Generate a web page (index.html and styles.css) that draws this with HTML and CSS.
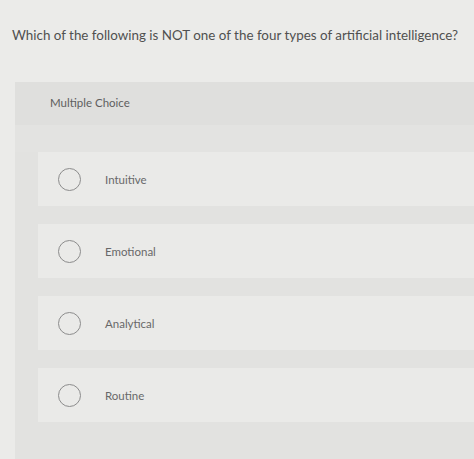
FILE: index.html
```
<!DOCTYPE html>
<html>
<head>
<meta charset="utf-8">
<link rel="stylesheet" href="styles.css">
</head>
<body>
<p class="question">Which of the following is NOT one of the four types of artificial intelligence?</p>
<div class="panel">
  <div class="panel-head">Multiple Choice</div>
  <div class="options">
    <label class="option"><span class="radio"></span><span class="label">Intuitive</span></label>
    <label class="option"><span class="radio"></span><span class="label">Emotional</span></label>
    <label class="option"><span class="radio"></span><span class="label">Analytical</span></label>
    <label class="option"><span class="radio"></span><span class="label">Routine</span></label>
  </div>
</div>
</body>
</html>
```
FILE: styles.css
```
html, body {
  margin: 0;
  padding: 0;
  height: 100%;
  overflow: hidden;
}
body {
  background: #ebebe9;
  font-family: Lato, "Open Sans", sans-serif;
  color: #4a4a4a;
}
.question {
  margin: 0;
  padding: 25px 0 0 12px;
  font-size: 13.4px;
  line-height: 20px;
  color: #505050;
  white-space: nowrap;
}
.panel {
  margin: 37px 0 0 15px;
  background: #e2e2e0;
  height: 377px;
  padding-left: 23px;
}
.panel-head {
  margin-left: -23px;
  padding: 13px 0 0 35px;
  height: 70px;
  box-sizing: border-box;
  font-size: 11.5px;
  line-height: 16px;
  color: #5e5e5e;
  background: linear-gradient(#dfdfdd 0, #dfdfdd 43px, #e3e3e1 43px);
}
.options {
  display: flex;
  flex-direction: column;
  gap: 18px;
}
.option {
  display: flex;
  align-items: center;
  height: 54px;
  padding-left: 20px;
  background: #eaeae8;
}
.radio {
  width: 21px;
  height: 21px;
  border: 1.5px solid #8c8c8c;
  border-radius: 50%;
  flex: none;
}
.label {
  margin-left: 24px;
  font-size: 11.5px;
  color: #686868;
}
```
